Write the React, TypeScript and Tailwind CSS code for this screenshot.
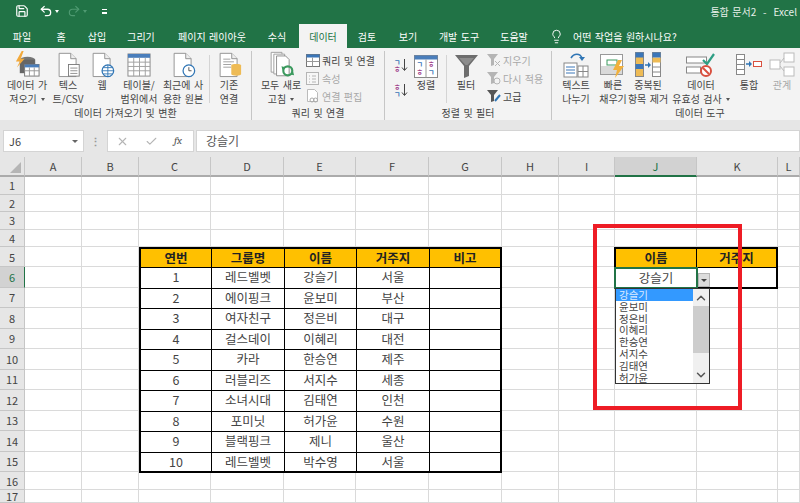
import { ChevronDown, ChevronUp, Lightbulb, Check, X, Save, Undo2, Redo2 } from "lucide-react";
import type { ReactNode } from "react";

const COLS = ["A", "B", "C", "D", "E", "F", "G", "H", "I", "J", "K", "L"];
const ROW_HEADS = Array.from({ length: 17 }, (_, i) => i + 1);
const TABS = [
	{ label: "파일", cls: "w-[34px] ml-[5px]" },
	{ label: "홈", cls: "w-[28px] ml-[8px]" },
	{ label: "삽입", cls: "w-[36px] ml-[4px]" },
	{ label: "그리기", cls: "w-[44px] ml-[4px]" },
	{ label: "페이지 레이아웃", cls: "w-[92px] ml-[3px]" },
	{ label: "수식", cls: "w-[36px] ml-[1px]" },
	{ label: "데이터", cls: "w-[48px] ml-[4px]" },
	{ label: "검토", cls: "w-[36px] ml-[2px]" },
	{ label: "보기", cls: "w-[36px] ml-[5px]" },
	{ label: "개발 도구", cls: "w-[56px] ml-[5px]" },
	{ label: "도움말", cls: "w-[48px] ml-[3px]" },
];

const TABLE = [
	["1", "레드벨벳", "강슬기", "서울"],
	["2", "에이핑크", "윤보미", "부산"],
	["3", "여자친구", "정은비", "대구"],
	["4", "걸스데이", "이혜리", "대전"],
	["5", "카라", "한승연", "제주"],
	["6", "러블리즈", "서지수", "세종"],
	["7", "소녀시대", "김태연", "인천"],
	["8", "포미닛", "허가윤", "수원"],
	["9", "블랙핑크", "제니", "울산"],
	["10", "레드벨벳", "박수영", "서울"],
];
const NAMES = ["강슬기", "윤보미", "정은비", "이혜리", "한승연", "서지수", "김태연", "허가윤"];

function Caret() {
	return <span className="inline-block ml-1 align-middle border-x-[2.5px] border-t-[3px] border-x-transparent border-t-[#555]" />;
}

function Tool({ width, icon, lines, disabled, caret }: { width: string; icon: ReactNode; lines: string[]; disabled?: boolean; caret?: boolean }) {
	return (
		<div className={`${width} shrink-0 flex flex-col items-center ${disabled ? "text-[#a8a8a8]" : "text-[#444]"}`}>
			<div className="h-[27px] flex items-end justify-center">{icon}</div>
			<div className="text-[10px] [word-spacing:1.2px] leading-[13.5px] text-center whitespace-nowrap">
				{lines.map((l, i) => (
					<div key={l}>
						{l}
						{caret && i === lines.length - 1 && <Caret />}
					</div>
				))}
			</div>
		</div>
	);
}

function SmallTool({ icon, label, disabled }: { icon: ReactNode; label: string; disabled?: boolean }) {
	return (
		<div className={`h-[18px] flex items-center gap-[2px] text-[10px] [word-spacing:1.2px] whitespace-nowrap ${disabled ? "text-[#a8a8a8]" : "text-[#444]"}`}>
			<span className="w-[15px] h-[15px] flex items-center justify-center">{icon}</span>
			{label}
		</div>
	);
}

function Group({ width, label, children }: { width: string; label: string; children: ReactNode }) {
	return (
		<div className={`${width} shrink-0 flex flex-col border-r border-[#c6c6c6] mt-[3px]`}>
			<div className="flex h-[55px]">{children}</div>
			<div className="text-[10px] [word-spacing:1.2px] leading-[14px] text-center text-[#444] mt-[1px] whitespace-nowrap">{label}</div>
		</div>
	);
}

function Doc({ children }: { children?: ReactNode }) {
	return (
		<svg width="25" height="27" viewBox="0 0 28 30" fill="none">
			<path d="M3.5 2.5h13l6 6v20h-19z" fill="#fff" stroke="#8a8a8a" />
			<path d="M16.5 2.5v6h6" fill="#eee" stroke="#8a8a8a" />
			{children}
		</svg>
	);
}

function SortGlyph({ top, bottom }: { top: string; bottom: string }) {
	const color = (g: string) => (g === "ㄱ" ? "#3b76b8" : "#a0408c");
	return (
		<svg width="14" height="14" viewBox="0 0 14 14" fill="none">
			<text x="0" y="6.5" fontSize="7" fontWeight="700" fill={color(top)} fontFamily="Noto Sans CJK KR">{top}</text>
			<text x="0" y="13.5" fontSize="7" fontWeight="700" fill={color(bottom)} fontFamily="Noto Sans CJK KR">{bottom}</text>
			<path d="M10.5 1v11M8 9.5l2.5 3 2.5-3" stroke="#444" />
		</svg>
	);
}

function Ribbon() {
	return (
		<div className="h-[72px] bg-[#f3f3f3] flex overflow-hidden">
			<Group width="w-[252px]" label="데이터 가져오기 및 변환">
				<Tool
					width="w-[50px] ml-[2px]"
					lines={["데이터 가", "져오기"]}
					caret
					icon={
						<svg width="27" height="27" viewBox="0 0 28 28" fill="none">
							<ellipse cx="14" cy="9" rx="8" ry="3" fill="#777" />
							<path d="M6 9v14h16V9" fill="#666" />
							<path d="M8 0L2 11h4L3 17l8-9H7l3-8z" fill="#f2a93b" />
							<rect x="11" y="14" width="15" height="12" fill="#fff" stroke="#777" />
							<rect x="11" y="14" width="15" height="3" fill="#4a7ebb" />
							<path d="M11 20.5h15M16 17v9M21 17v9" stroke="#999" />
						</svg>
					}
				/>
				<Tool
					width="w-[32px]"
					lines={["텍스", "트/CSV"]}
					icon={
						<Doc>
							<rect x="14" y="15" width="12" height="13" fill="#fff" stroke="#777" />
							<path d="M16 19h8M16 22h8M16 25h8" stroke="#888" />
						</Doc>
					}
				/>
				<Tool
					width="w-[36px]"
					lines={["웹"]}
					icon={
						<Doc>
							<circle cx="20" cy="22" r="6.5" fill="#fff" stroke="#2f75b5" strokeWidth="1.4" />
							<path d="M13.5 22h13M20 15.5v13M15 18.5h10M15 25.5h10" stroke="#2f75b5" />
						</Doc>
					}
				/>
				<Tool
					width="w-[38px]"
					lines={["테이블/", "범위에서"]}
					icon={
						<svg width="25" height="25" viewBox="0 0 26 26" fill="none">
							<rect x="1" y="1" width="23" height="23" fill="#fff" stroke="#8a8a8a" />
							<rect x="1" y="1" width="23" height="4" fill="#4a7ebb" />
							<path d="M1 9.5h23M1 14h23M1 18.5h23M7 5v19M13 5v19M19 5v19" stroke="#a0a0a0" />
						</svg>
					}
				/>
				<Tool
					width="w-[50px]"
					lines={["최근에 사", "용한 원본"]}
					icon={
						<Doc>
							<circle cx="20" cy="22" r="6.5" fill="#fff" stroke="#2f75b5" strokeWidth="1.4" />
							<path d="M20 18v4h3" stroke="#444" />
						</Doc>
					}
				/>
				<div className="w-px h-[48px] bg-[#d4d4d4] ml-[1px] mt-[4px]" />
				<Tool
					width="w-[38px]"
					lines={["기존", "연결"]}
					icon={
						<Doc>
							<path d="M7 9h8M7 12h12M7 15h9M7 18h9" stroke="#999" />
							<path d="M16 16c0-2 11-2 11 0v10c0 2-11 2-11 0z" fill="#eebb55" />
						</Doc>
					}
				/>
			</Group>
			<Group width="w-[133px]" label="쿼리 및 연결">
				<Tool
					width="w-[52px] ml-[3px]"
					lines={["모두 새로", "고침"]}
					caret
					icon={
						<svg width="27" height="27" viewBox="0 0 30 30" fill="none">
							<path d="M3.5 1.5h12v22h-12z" fill="#fff" stroke="#999" />
							<path d="M6.5 3.5h12v22h-12z" fill="#fff" stroke="#999" />
							<path d="M9.5 5.5h10l4 4v18h-14z" fill="#fff" stroke="#888" />
							<circle cx="22" cy="22" r="5" fill="none" stroke="#3c9a5f" strokeWidth="2.4" />
							<path d="M15 17l4 1-3 3zM29 27l-4-1 3-3z" fill="#3c9a5f" />
						</svg>
					}
				/>
				<div className="flex flex-col ml-[-2px]">
					<SmallTool
						label="쿼리 및 연결"
						icon={
							<svg width="14" height="13" viewBox="0 0 14 13" fill="none">
								<rect x=".5" y=".5" width="13" height="12" fill="#fff" stroke="#777" />
								<rect x=".5" y=".5" width="13" height="3" fill="#3b76b8" />
								<path d="M.5 7.5h13M6.5 3.5v9" stroke="#999" />
							</svg>
						}
					/>
					<SmallTool
						disabled
						label="속성"
						icon={
							<svg width="13" height="13" viewBox="0 0 13 13" fill="none">
								<rect x=".5" y=".5" width="12" height="12" fill="#f7f7f7" stroke="#b5b5b5" />
								<path d="M3 4h1M6 4h4M3 7h1M6 7h4M3 10h1M6 10h4" stroke="#b5b5b5" />
							</svg>
						}
					/>
					<SmallTool
						disabled
						label="연결 편집"
						icon={
							<svg width="13" height="14" viewBox="0 0 13 14" fill="none">
								<path d="M1.5.5h7l3 3v9h-10z" fill="#fff" stroke="#bbb" />
								<circle cx="6" cy="11" r="2" stroke="#aaa" />
								<circle cx="9.5" cy="11" r="2" stroke="#aaa" />
							</svg>
						}
					/>
				</div>
			</Group>
			<Group width="w-[167px]" label="정렬 및 필터">
				<div className="w-[20px] ml-[9px] mr-[-1px] flex flex-col gap-[11px] mt-[7px] shrink-0">
					<SortGlyph top="ㄱ" bottom="ㅎ" />
					<SortGlyph top="ㅎ" bottom="ㄱ" />
				</div>
				<Tool
					width="w-[26px]"
					lines={["정렬"]}
					icon={
						<svg width="24" height="23" viewBox="0 0 24 23" fill="none">
							<rect x=".5" y=".5" width="23" height="22" fill="#fff" stroke="#888" />
							<rect x=".5" y=".5" width="23" height="4" fill="#4a7ebb" />
							<path d="M12 4.5v18" stroke="#999" />
							<text x="2.5" y="12" fontSize="7" fontWeight="700" fill="#3b76b8" fontFamily="Noto Sans CJK KR">ㄱ</text>
							<text x="14" y="12" fontSize="7" fontWeight="700" fill="#a0408c" fontFamily="Noto Sans CJK KR">ㅎ</text>
							<text x="2.5" y="20" fontSize="7" fontWeight="700" fill="#a0408c" fontFamily="Noto Sans CJK KR">ㅎ</text>
							<text x="14" y="20" fontSize="7" fontWeight="700" fill="#3b76b8" fontFamily="Noto Sans CJK KR">ㄱ</text>
						</svg>
					}
				/>
				<div className="w-px h-[48px] bg-[#d4d4d4] ml-[7px] mt-[4px]" />
				<Tool
					width="w-[38px]"
					lines={["필터"]}
					icon={
						<svg width="23" height="23" viewBox="0 0 23 23">
							<path d="M0 0h23L14 11v10l-5 2V11z" fill="#6d6d6d" />
							<path d="M4 3h15L12.5 10h-2z" fill="#8c8c8c" />
						</svg>
					}
				/>
				<div className="flex flex-col ml-[1px]">
					<SmallTool disabled label="지우기" icon={<svg width="14" height="14" viewBox="0 0 14 14"><path d="M0 1h11L7 6v6L4 13V6z" fill="#b5b5b5" /><path d="M8 8l5 5M13 8l-5 5" stroke="#b5b5b5" /></svg>} />
					<SmallTool disabled label="다시 적용" icon={<svg width="14" height="14" viewBox="0 0 14 14" fill="none"><path d="M0 1h11L7 6v6L4 13V6z" fill="#b5b5b5" /><circle cx="10" cy="10" r="3" stroke="#b5b5b5" /></svg>} />
					<SmallTool label="고급" icon={<svg width="14" height="14" viewBox="0 0 14 14" fill="none"><path d="M0 1h11L7 6v6L4 13V6z" fill="#555" /><path d="M8 12l5-6" stroke="#2f75b5" strokeWidth="2" /></svg>} />
				</div>
			</Group>
			<div className="flex-1 flex flex-col mt-[3px] min-w-0">
				<div className="flex h-[55px]">
					<Tool
						width="w-[38px] ml-[5px]"
						lines={["텍스트", "나누기"]}
						icon={
							<svg width="26" height="26" viewBox="0 0 26 26" fill="none">
								<path d="M8 6c3-5 9-5 11 0" stroke="#2f75b5" strokeWidth="1.6" />
								<path d="M16 5h6l-3 4z" fill="#2f75b5" />
								<rect x="1" y="11" width="13" height="14" fill="#fff" stroke="#888" />
								<path d="M3 15h9M3 18h9M3 21h9" stroke="#3b76b8" />
								<rect x="15" y="14" width="10" height="11" fill="#fff" stroke="#888" />
								<path d="M15 19.5h10M20 14v11" stroke="#888" />
							</svg>
						}
					/>
					<Tool
						width="w-[36px]"
						lines={["빠른", "채우기"]}
						icon={
							<svg width="26" height="26" viewBox="0 0 26 26" fill="none">
								<rect x=".5" y="2.5" width="22" height="20" fill="#fff" stroke="#999" />
								<rect x="7" y="8" width="10" height="5" stroke="#3c9a5f" />
								<rect x="1" y="14" width="21" height="8" fill="#d9d9d9" />
								<path d="M18 8l-5 10h4l-2 8 9-12h-5l3-6z" fill="#f2b13b" />
							</svg>
						}
					/>
					<Tool
						width="w-[34px]"
						lines={["중복된", "항목 제거"]}
						icon={
							<svg width="26" height="26" viewBox="0 0 26 26" fill="none">
								<rect x=".5" y=".5" width="8" height="24" fill="#eebb55" stroke="#888" />
								<rect x=".5" y=".5" width="8" height="5" fill="#3b76b8" />
								<rect x=".5" y="12" width="8" height="5" fill="#3b76b8" />
								<rect x="17.5" y=".5" width="8" height="24" fill="#fff" stroke="#888" />
								<rect x="17.5" y="5.5" width="8" height="5" fill="#eebb55" />
								<rect x="17.5" y=".5" width="8" height="5" fill="#3b76b8" />
								<path d="M18 15h7M18 20h7" stroke="#888" />
								<path d="M10 13h4" stroke="#2f75b5" strokeWidth="1.5" />
								<path d="M13 10l3 3-3 3z" fill="#2f75b5" />
							</svg>
						}
					/>
					<Tool
						width="w-[72px]"
						lines={["데이터", "유효성 검사"]}
						caret
						icon={
							<svg width="30" height="26" viewBox="0 0 30 26" fill="none">
								<rect x=".5" y="5" width="20" height="6" fill="#fff" stroke="#888" />
								<rect x=".5" y="15" width="14" height="6" fill="#fff" stroke="#888" />
								<path d="M17 8l4 4 7-10" stroke="#2e9e84" strokeWidth="2.2" />
								<circle cx="20" cy="19" r="5" fill="#fff" stroke="#d9503f" strokeWidth="2" />
								<path d="M17 16l6 6" stroke="#d9503f" strokeWidth="2" />
							</svg>
						}
					/>
					<Tool
						width="w-[24px]"
						lines={["통합"]}
						icon={
							<svg width="26" height="26" viewBox="0 0 26 26" fill="none">
								<rect x=".5" y="2.5" width="8" height="20" fill="#fff" stroke="#888" />
								<path d="M1 7.5h7M1 12.5h7M1 17.5h7" stroke="#888" />
								<path d="M10 12h4" stroke="#2f75b5" strokeWidth="1.5" />
								<path d="M13 9l3 3-3 3z" fill="#2f75b5" />
								<rect x="17.5" y="9.5" width="8" height="5" fill="#fff" stroke="#d9503f" />
							</svg>
						}
					/>
					<Tool
						disabled
						width="w-[38px] ml-[2px]"
						lines={["관계"]}
						icon={
							<svg width="26" height="26" viewBox="0 0 26 26" fill="none">
								<rect x="1" y="8" width="10" height="9" fill="#fff" stroke="#bbb" />
								<rect x="15" y="1" width="10" height="9" fill="#fff" stroke="#bbb" />
								<rect x="15" y="15" width="10" height="9" fill="#fff" stroke="#bbb" />
								<path d="M11 11l4-5M11 14l4 5" stroke="#bbb" />
							</svg>
						}
					/>
				</div>
				<div className="text-[10px] [word-spacing:1.2px] leading-[14px] text-center text-[#444] mt-[1px] ml-[48px]">데이터 도구</div>
			</div>
		</div>
	);
}

function GridCell({ head, value, className = "" }: { head?: boolean; value?: string; className?: string }) {
	return (
		<div className={`flex items-center justify-center text-[12.5px] ${head ? "bg-[#ffc000] font-semibold text-[#222]" : "text-[#444]"} ${className}`}>
			{value}
		</div>
	);
}

function DataTable() {
	return (
		<div className="absolute left-[139px] top-[70px] w-[363px] h-[226px] border-2 border-black grid grid-cols-[71px_73px_72px_73px_1fr] grid-rows-[19px_repeat(10,20.5px)] bg-white">
			{["연번", "그룹명", "이름", "거주지", "비고"].map((h, i) => (
				<GridCell key={h} head value={h} className={`border-b border-black ${i < 4 ? "border-r" : ""}`} />
			))}
			{TABLE.map((row, r) =>
				[...row, ""].map((v, c) => (
					<GridCell key={`${r}-${c}`} value={v} className={`border-black ${c < 4 ? "border-r" : ""} ${r < 9 ? "border-b" : ""}`} />
				)),
			)}
		</div>
	);
}

function Lookup() {
	return (
		<>
			<div className="absolute left-[614px] top-[70px] w-[164px] h-[42px] border-2 border-black grid grid-cols-[81px_1fr] grid-rows-[19px_1fr] bg-white">
				<GridCell head value="이름" className="border-b border-r border-black" />
				<GridCell head value="거주지" className="border-b border-black" />
				<div />
				<div className="border-l border-black" />
			</div>
			{/* active cell */}
			<div className="absolute left-[614px] top-[90px] w-[84px] h-[22px] border-2 border-[#217346] bg-white flex items-center justify-center text-[12.5px] text-[#444]">
				강슬기
			</div>
			{/* list drop button */}
			<div className="absolute left-[698px] top-[96px] w-[12px] h-[14px] bg-[#dcdcdc] border border-[#b5b5b5] flex items-center justify-center">
				<span className="border-x-[3px] border-t-[3px] border-x-transparent border-t-[#444]" />
			</div>
			{/* validation list */}
			<div className="absolute left-[615px] top-[111px] w-[95px] h-[96px] border border-[#333] bg-white flex">
				<div className="w-[77px] text-[10.5px] leading-[11.8px] text-[#444]">
					{NAMES.map((n, i) => (
						<div key={n} className={`pl-[3px] ${i === 0 ? "bg-[#3399ff] text-[#dbeaff]" : ""}`}>
							{n}
						</div>
					))}
				</div>
				<div className="flex-1 bg-[#f0f0f0] flex flex-col items-center">
					<div className="h-[17px] flex items-center">
						<ChevronUp size={14} strokeWidth={2.5} className="text-[#555]" />
					</div>
					<div className="w-full h-[47px] bg-[#cdcdcd]" />
					<div className="flex-1 flex items-end pb-[1px]">
						<ChevronDown size={14} strokeWidth={2.5} className="text-[#555]" />
					</div>
				</div>
			</div>
			{/* callout */}
			<div className="absolute left-[593px] top-[47px] w-[149px] h-[186px] border-[4px] border-[#ee1c25]" />
		</>
	);
}

export default function App() {
	return (
		<div className="w-[800px] h-[503px] overflow-hidden bg-white" style={{ fontFamily: '"Noto Sans CJK KR", "Noto Sans", sans-serif' }}>
			<div className="h-[48px] bg-[#217346] text-white flex flex-col">
				<div className="h-[24px] flex items-center pl-[15px] pb-[2px]">
					<Save size={14} strokeWidth={2} />
					<Undo2 size={14} strokeWidth={2.2} className="ml-[10px]" />
					<span className="ml-[2px] border-x-[2.5px] border-t-[3px] border-x-transparent border-t-white" />
					<Redo2 size={14} strokeWidth={2} className="ml-[8px] text-[#4f9a72]" />
					<span className="ml-[2px] border-x-[2.5px] border-t-[3px] border-x-transparent border-t-[#4f9a72]" />
					<span className="ml-[15px] w-[5px] h-[5px] border-t border-b-2 border-white" />
					<span className="ml-auto mr-[3px] text-[10px] [word-spacing:1.2px] whitespace-nowrap text-[#e8f0ea]">통합 문서2&nbsp; -&nbsp; Excel</span>
				</div>
				<div className="h-[24px] flex items-stretch">
					{TABS.map((t) => (
						<div
							key={t.label}
							className={`${t.cls} shrink-0 flex items-center justify-center text-[10px] [word-spacing:1.2px] whitespace-nowrap ${t.label === "데이터" ? "bg-[#f3f3f3] text-[#217346]" : ""}`}
						>
							{t.label}
						</div>
					))}
					<div className="flex items-center ml-[11px] text-[10px] [word-spacing:1.2px] whitespace-nowrap">
						<Lightbulb size={15} strokeWidth={1.5} className="mr-[9px]" />
						어떤 작업을 원하시나요?
					</div>
				</div>
			</div>
			<Ribbon />
			<div className="h-[37px] bg-[#e6e6e6] flex items-start pt-[10px] pl-[3px]">
				<div className="w-[81px] h-[22px] bg-white border border-[#d4d4d4] flex items-center justify-between px-[5px] text-[11px] text-[#444]">
					J6
					<span className="border-x-[3px] border-t-[3px] border-x-transparent border-t-[#666]" />
				</div>
				<div className="w-[23px] h-[22px] flex items-center justify-center text-[#999] text-[11px] font-bold">⋮</div>
				<div className="w-[87px] h-[22px] bg-white border border-[#d4d4d4] flex items-center text-[#b5b5b5]">
					<X size={13} className="ml-[8px]" />
					<Check size={13} className="ml-[16px]" />
					<span className="ml-[16px] text-[11px] italic font-serif text-[#555]">fx</span>
				</div>
				<div className="ml-[2px] flex-1 h-[22px] bg-white border border-[#d4d4d4] flex items-center pl-[9px] text-[12px] text-[#555]">강슬기</div>
			</div>
			<div className="h-[346px] relative overflow-hidden">
				<div className="grid grid-cols-[25px_57px_57px_72px_73px_72px_73px_73px_57px_56px_82px_81px_22px] grid-rows-[20px_repeat(4,17.5px)_20px_repeat(10,20.5px)_18px_13px] h-[346px]">
					<div className="bg-[#e6e6e6] border-b-2 border-[#ababab] border-r border-r-[#c6c6c6] relative">
						<div className="absolute right-[3px] bottom-[2px] border-l-[11px] border-b-[11px] border-l-transparent border-b-[#b5b5b5]" />
					</div>
					{COLS.map((c) => (
						<div key={c} className={`flex items-center justify-center text-[11px] border-b-2 border-r border-r-[#c6c6c6] ${c === "J" ? "bg-[#d2d2d2] text-[#217346] border-b-[#217346]" : "bg-[#e6e6e6] text-[#444] border-b-[#ababab]"}`}>
							{c}
						</div>
					))}
					{ROW_HEADS.map((r) => (
						<div key={r} className="contents">
							<div className={`flex items-center justify-center text-[11px] leading-[12px] border-b border-r border-b-[#c6c6c6] ${r === 6 ? "bg-[#d2d2d2] text-[#217346] border-r-[#217346]" : "bg-[#e6e6e6] text-[#444] border-r-[#c6c6c6]"}`}>
								{r}
							</div>
							{COLS.map((c) => (
								<div key={c} className="border-b border-r border-[#dadada]" />
							))}
						</div>
					))}
				</div>
				<div className="absolute inset-0 top-[20px] pointer-events-none">
					<DataTable />
					<Lookup />
				</div>
			</div>
		</div>
	);
}
